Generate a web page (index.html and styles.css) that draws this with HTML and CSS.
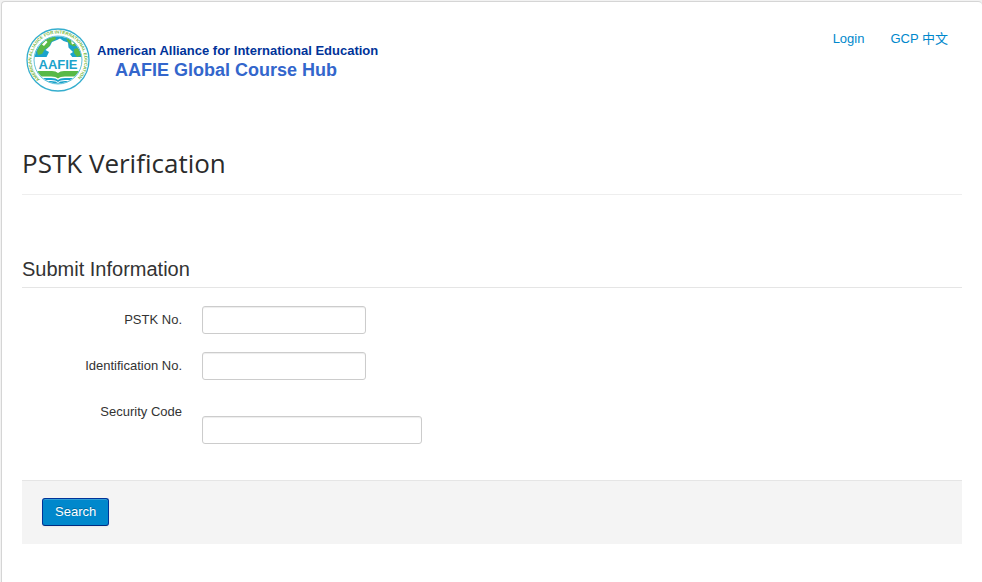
FILE: index.html
```
<!DOCTYPE html>
<html lang="en">
<head>
<meta charset="utf-8">
<title>PSTK Verification</title>
<link rel="stylesheet" href="styles.css">
</head>
<body>
<div class="page">
  <header class="header">
    <div class="brand">
      <svg class="logo" viewBox="0 0 132 132" role="img" aria-label="AAFIE">
        <defs>
          <path id="ring" d="M30 105A53 53 0 1 1 102 105"/>
          <clipPath id="globe"><circle cx="66" cy="66" r="47"/></clipPath>
        </defs>
        <circle cx="66" cy="66" r="62" fill="#fff" stroke="#35aece" stroke-width="2.6"/>
        <g clip-path="url(#globe)">
          <path fill="#1ba3cb" d="M16 16h100v44H16z"/>
          <path fill="#58b947" d="M24 48l10-18 14-10 12-2 2 6-10 6-4 10-8 4-6 10-8 2zM82 19l14 6 10 10-8 4-8-4-6-8zM98 44l8-2 8 14-10 4-6-8z"/>
          <path fill="#fff" d="M42 62l6-12-7-4 9-8 4-8 10-4 6-3 7 5 9 3 1 10 9 9-6 4 6 8zM16 60h100v30H16zM34 35l8-8 3 3-7 8zM92 28l7 5-5 2z"/>
          <path fill="#58b947" d="M16 88h38q8 0 12 4 4-4 12-4h38v11H80q-10 0-14 4-4-4-14-4H16z"/>
          <path fill="#1ba3cb" d="M20 102h32q10 0 14 4 4-4 14-4h32L92 120H40z"/>
          <path fill="none" stroke="#fff" stroke-width="2" d="M28 107h24q10 0 14 4 4-4 14-4h24"/>
        </g>
        <circle cx="66" cy="66" r="48" fill="none" stroke="#35aece" stroke-width="1.6"/>
        <text class="ring-text"><textPath href="#ring">AMERICAN ALLIANCE FOR INTERNATIONAL EDUCATION</textPath></text>
        <text class="logo-text" x="66" y="83" text-anchor="middle">AAFIE</text>
      </svg>
      <div class="brand-text">
        <div class="org">American Alliance for International Education</div>
        <div class="hub">AAFIE Global Course Hub</div>
      </div>
    </div>
    <nav class="nav">
      <a href="#login">Login</a>
      <a href="#gcp">GCP 中文</a>
    </nav>
  </header>
  <main>
    <h1>PSTK Verification</h1>
    <form>
      <h2>Submit Information</h2>
      <div class="row">
        <label for="pstk">PSTK No.</label>
        <input id="pstk" type="text">
      </div>
      <div class="row">
        <label for="ident">Identification No.</label>
        <input id="ident" type="text">
      </div>
      <div class="row">
        <label for="code">Security Code</label>
        <input class="code" id="code" type="text">
      </div>
      <div class="actions">
        <button type="submit">Search</button>
      </div>
    </form>
  </main>
</div>
</body>
</html>
```
FILE: styles.css
```
* {
  box-sizing: border-box;
}

body {
  margin: 0;
  padding: 1px 0 0 1px;
  background: #f2f2f2;
  color: #333;
  font: 13px/18px "Liberation Sans", "Noto Sans CJK SC", sans-serif;
}

.page {
  min-height: calc(100vh - 1px);
  padding: 20px;
  background: #fff;
  border: 1px solid #d5d5d5;
  border-width: 1px 0 0 1px;
  border-radius: 4px 4px 0 0;
}

.header {
  display: flex;
  justify-content: space-between;
  align-items: flex-start;
  padding: 5px 14px 0 3px;
}

.brand {
  display: flex;
}

.logo {
  width: 66px;
  height: 66px;
}

.ring-text {
  font: bold 9px "Liberation Sans", sans-serif;
  fill: #76b83f;
}

.logo-text {
  font: bold 26px "Liberation Sans", sans-serif;
  fill: #1ba3cb;
}

.brand-text {
  padding: 15px 0 0 6px;
  font-weight: bold;
}

.org {
  color: #039;
  line-height: 18px;
}

.hub {
  padding-left: 18px;
  color: #36c;
  font-size: 18px;
  line-height: 20px;
}

.nav {
  display: flex;
  gap: 26px;
  padding-top: 3px;
}

.nav a {
  color: #08c;
  text-decoration: none;
}

h1 {
  margin: 50px 0 56px;
  padding-bottom: 11px;
  border-bottom: 1px solid #eee;
  color: #2b2b2b;
  font: 500 26px/40px "Open Sans", sans-serif;
}

h2 {
  margin: 0 0 18px;
  border-bottom: 1px solid #e5e5e5;
  font-size: 20px;
  font-weight: normal;
  line-height: 36px;
}

.row {
  display: flex;
  align-items: flex-start;
  gap: 20px;
  margin-bottom: 18px;
}

.row label {
  width: 160px;
  padding-top: 5px;
  text-align: right;
}

.row input {
  width: 164px;
  height: 28px;
  padding: 4px 6px;
  border: 1px solid #ccc;
  border-radius: 3px;
  box-shadow: inset 0 1px 1px rgba(0, 0, 0, .075);
  font: inherit;
}

.row .code {
  width: 220px;
  margin-top: 18px;
}

.actions {
  margin-top: 36px;
  padding: 17px 20px 18px;
  background: #f4f4f4;
  border-top: 1px solid #e5e5e5;
}

button {
  display: block;
  height: 28px;
  padding: 0 12px;
  background: #08c;
  border: 1px solid #039;
  border-bottom-color: #002a80;
  border-radius: 3px;
  box-shadow: inset 0 1px 0 rgba(255, 255, 255, .2), 0 1px 2px rgba(0, 0, 0, .05);
  color: #fff;
  font: inherit;
  text-shadow: 0 -1px 0 rgba(0, 0, 0, .25);
}
```
